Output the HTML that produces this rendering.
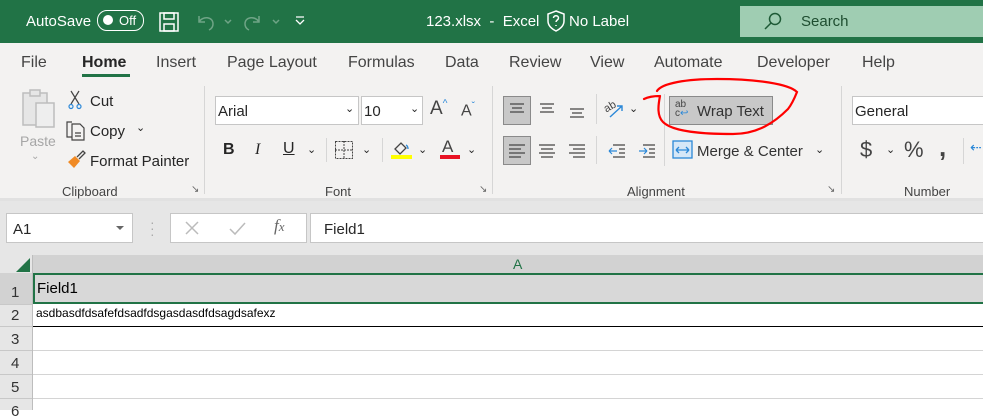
<!DOCTYPE html>
<html><head><meta charset="utf-8"><style>
*{box-sizing:border-box;margin:0;padding:0}
body{width:983px;height:410px;overflow:hidden;background:#fff;font-family:"Segoe UI","Liberation Sans",sans-serif;position:relative;color:#262626}
.a{position:absolute;white-space:nowrap}
.t{font-size:16px;color:#444;margin-top:2px}
.s{font-size:15px;color:#262626;margin-top:2px}
.g{font-size:13px;color:#444;margin-top:2px}
.w{color:#fff;font-size:15px;margin-top:3px}
.box{position:absolute;background:#fff;border:1px solid #c6c6c6}
.sel{position:absolute;background:#c8c8c8;border:1px solid #8a8a8a}
</style></head><body>
<!-- title bar -->
<div class="a" style="left:0;top:0;width:983px;height:43px;background:#217346"></div>
<div class="a w" style="left:26px;top:10px">AutoSave</div>
<div class="a" style="left:97px;top:10px;width:47px;height:21px;border:1.5px solid #fff;border-radius:10px"></div>
<div class="a" style="left:103px;top:15px;width:10px;height:10px;border-radius:5px;background:#fff"></div>
<div class="a" style="left:119px;top:13px;color:#fff;font-size:13px">Off</div>
<svg class="a" style="left:158px;top:11px" width="22" height="22" viewBox="0 0 22 22" fill="none" stroke="#fff" stroke-width="1.5"><rect x="2" y="2" width="18" height="18"/><rect x="6" y="2" width="10" height="6"/><rect x="6" y="13" width="10" height="7"/></svg>
<svg class="a" style="left:195px;top:12px" width="90" height="20" viewBox="0 0 90 20" fill="none" stroke="#6fa486" stroke-width="1.5"><path d="M4 4v6h6M4 10c3-6 14-6 14 2 0 3-2 5-4 6"/><path d="M30 8l3 3 3-3"/><path d="M64 4v6h-6M64 10c-3-6-14-6-14 2 0 3 2 5 4 6"/><path d="M78 8l3 3 3-3"/></svg>
<svg class="a" style="left:294px;top:14px" width="12" height="12" fill="none" stroke="#fff" stroke-width="1.3"><path d="M2 3h8M2 6l4 4 4-4"/></svg>
<div class="a w" style="left:426px;top:10px">123.xlsx &nbsp;-&nbsp; Excel</div>
<svg class="a" style="left:545px;top:9px" width="22" height="24" viewBox="0 0 22 24" fill="none" stroke="#fff" stroke-width="1.5"><path d="M11 2l8 3v7c0 5-4 8-8 10-4-2-8-5-8-10V5z"/><path d="M8.5 9c0-3 5-3 5 0 0 2-2.5 2-2.5 4M11 16v1"/></svg>
<div class="a w" style="left:569px;top:10px">No Label</div>
<div class="a" style="left:740px;top:6px;width:243px;height:31px;background:#9fcdb2"></div>
<svg class="a" style="left:763px;top:11px" width="20" height="20" fill="none" stroke="#1e5a36" stroke-width="1.5"><circle cx="12" cy="8" r="5.5"/><path d="M8 12l-6 6"/></svg>
<div class="a w" style="left:801px;top:10px;color:#1e4d30">Search</div>
<!-- ribbon -->
<div class="a" style="left:0;top:43px;width:983px;height:157px;background:#f3f2f1"></div>
<div class="a" style="left:0;top:198px;width:983px;height:3px;background:#e1e1e1"></div>
<div class="a t" style="left:21px;top:52px">File</div>
<div class="a t" style="left:82px;top:52px;color:#262626;font-weight:bold">Home</div>
<div class="a" style="left:82px;top:74px;width:48px;height:3px;background:#217346"></div>
<div class="a t" style="left:156px;top:52px">Insert</div>
<div class="a t" style="left:227px;top:52px">Page Layout</div>
<div class="a t" style="left:348px;top:52px">Formulas</div>
<div class="a t" style="left:445px;top:52px">Data</div>
<div class="a t" style="left:509px;top:52px">Review</div>
<div class="a t" style="left:590px;top:52px">View</div>
<div class="a t" style="left:654px;top:52px">Automate</div>
<div class="a t" style="left:757px;top:52px">Developer</div>
<div class="a t" style="left:862px;top:52px">Help</div>
<!-- clipboard -->
<svg class="a" style="left:20px;top:88px" width="38" height="42" fill="#e6e6e6" stroke="#bdbdbd" stroke-width="1.5"><rect x="3" y="5" width="24" height="32"/><rect x="10" y="2" width="10" height="6"/><rect x="16" y="15" width="18" height="24" fill="#eee"/></svg>
<div class="a" style="left:20px;top:133px;color:#a6a6a6;font-size:14px">Paste</div>
<div class="a" style="left:31px;top:151px;color:#a6a6a6;font-size:10px">⌄</div>
<svg class="a" style="left:68px;top:90px" width="14" height="20" fill="none" stroke="#444" stroke-width="1.2"><path d="M3 1l8 13M11 1L3 14"/><circle cx="3" cy="16.5" r="2" stroke="#2b88d8"/><circle cx="11" cy="16.5" r="2" stroke="#2b88d8"/></svg>
<div class="a s" style="left:90px;top:91px">Cut</div>
<svg class="a" style="left:65px;top:119px" width="22" height="22" fill="none" stroke="#444" stroke-width="1.2"><path d="M7 3H2v15h5"/><path d="M7 5h8l4 4v12H7z"/><path d="M10 14h6M10 17h6"/></svg>
<div class="a s" style="left:90px;top:121px">Copy</div>
<div class="a" style="left:136px;top:121px;font-size:11px">⌄</div>
<svg class="a" style="left:65px;top:148px" width="22" height="22"><path d="M3 14l7-6 5 5-6 7z" fill="#f08a24"/><path d="M12 9l6-6 2 2-6 6" fill="none" stroke="#444" stroke-width="1.3"/></svg>
<div class="a s" style="left:90px;top:151px">Format Painter</div>
<div class="a g" style="left:62px;top:182px">Clipboard</div>
<div class="a" style="left:191px;top:184px;font-size:10px;color:#666">↘</div>
<div class="a" style="left:204px;top:86px;width:1px;height:108px;background:#d6d6d6"></div>
<!-- font -->
<div class="box" style="left:215px;top:96px;width:144px;height:29px"></div>
<div class="a s" style="left:218px;top:101px">Arial</div>
<div class="a" style="left:345px;top:102px;font-size:11px">⌄</div>
<div class="box" style="left:361px;top:96px;width:62px;height:29px"></div>
<div class="a s" style="left:364px;top:101px">10</div>
<div class="a" style="left:410px;top:102px;font-size:11px">⌄</div>
<div class="a" style="left:430px;top:98px;font-size:19px;color:#444">A<sup style="font-size:10px;color:#2b88d8">^</sup></div>
<div class="a" style="left:461px;top:101px;font-size:16px;color:#444">A<sup style="font-size:10px;color:#2b88d8">ˇ</sup></div>
<div class="a" style="left:223px;top:141px;font-size:16px;font-weight:bold">B</div>
<div class="a" style="left:255px;top:141px;font-size:16px;font-style:italic;font-family:'Liberation Serif',serif">I</div>
<div class="a" style="left:283px;top:140px;font-size:16px;text-decoration:underline">U</div>
<div class="a" style="left:307px;top:143px;font-size:11px">⌄</div>
<div class="a" style="left:326px;top:138px;width:1px;height:24px;background:#d6d6d6"></div>
<svg class="a" style="left:334px;top:140px" width="20" height="20" fill="none" stroke="#444" stroke-dasharray="2 1"><rect x="1.5" y="1.5" width="17" height="17"/><path d="M10 1v18M1 10h18"/></svg>
<div class="a" style="left:362px;top:143px;font-size:11px">⌄</div>
<div class="a" style="left:382px;top:138px;width:1px;height:24px;background:#d6d6d6"></div>
<svg class="a" style="left:391px;top:140px" width="22" height="20" fill="none" stroke="#444" stroke-width="1.3"><path d="M4 9l6-6 5 5-6 6z"/><path d="M15 5c2 1 2 3 2 4" stroke="#2b88d8"/></svg>
<div class="a" style="left:391px;top:155px;width:21px;height:4px;background:#ffff00"></div>
<div class="a" style="left:418px;top:143px;font-size:11px">⌄</div>
<div class="a" style="left:442px;top:137px;font-size:17px;color:#444">A</div>
<div class="a" style="left:440px;top:155px;width:20px;height:4px;background:#e81123"></div>
<div class="a" style="left:467px;top:143px;font-size:11px">⌄</div>
<div class="a g" style="left:325px;top:182px">Font</div>
<div class="a" style="left:479px;top:184px;font-size:10px;color:#666">↘</div>
<div class="a" style="left:492px;top:86px;width:1px;height:108px;background:#d6d6d6"></div>
<!-- alignment -->
<div class="sel" style="left:503px;top:96px;width:28px;height:29px"></div>
<svg class="a" style="left:503px;top:96px" width="90" height="29" stroke="#444" stroke-width="1.2"><path d="M7 8h14M9 12h10M7 16h14"/><path d="M37 8h14M39 12h10M37 16h14"/><path d="M67 13h14M69 17h10M67 21h14"/></svg>
<div class="a" style="left:596px;top:94px;width:1px;height:30px;background:#d6d6d6"></div>
<svg class="a" style="left:602px;top:97px" width="26" height="24" fill="none" stroke-width="1.4"><text x="2" y="13" font-size="11" fill="#444" stroke="none" transform="rotate(-30 8 10)" font-family="Liberation Sans">ab</text><path d="M8 20l12-11M15 9h5v5" stroke="#2b88d8"/></svg>
<div class="a" style="left:629px;top:102px;font-size:11px">⌄</div>
<div class="a" style="left:664px;top:94px;width:1px;height:72px;background:#d6d6d6"></div>
<div class="sel" style="left:669px;top:96px;width:104px;height:29px"></div>
<div class="a" style="left:675px;top:100px;font-size:10px;line-height:9px;color:#444">ab<br>c<span style="color:#2b88d8">↩</span></div>
<div class="a s" style="left:697px;top:101px;color:#333">Wrap Text</div>
<div class="sel" style="left:503px;top:136px;width:28px;height:29px"></div>
<svg class="a" style="left:503px;top:136px" width="160" height="29" stroke="#444" stroke-width="1.2" fill="none"><path d="M6 9h16M6 13h12M6 17h16M6 21h12"/><path d="M36 9h16M38 13h12M36 17h16M38 21h12"/><path d="M66 9h16M70 13h12M66 17h16M70 21h12"/><path d="M110 9h12M110 21h12M116 13h6M116 17h6"/><path d="M114 15h-8M106 15l3-3M106 15l3 3" stroke="#2b88d8"/><path d="M140 9h12M140 21h12M146 13h6M146 17h6"/><path d="M136 15h8M144 15l-3-3M144 15l-3 3" stroke="#2b88d8"/></svg>
<div class="a" style="left:596px;top:136px;width:1px;height:28px;background:#d6d6d6"></div>
<svg class="a" style="left:672px;top:140px" width="22" height="20" fill="none" stroke-width="1.3"><rect x="1" y="1" width="19" height="17" stroke="#2b88d8" fill="#d5e7f7"/><path d="M4 10h13M4 10l3-3M4 10l3 3M17 10l-3-3M17 10l-3 3" stroke="#2b88d8"/></svg>
<div class="a s" style="left:697px;top:141px;color:#333">Merge &amp; Center</div>
<div class="a" style="left:815px;top:143px;font-size:11px">⌄</div>
<div class="a g" style="left:627px;top:182px">Alignment</div>
<div class="a" style="left:827px;top:184px;font-size:10px;color:#666">↘</div>
<div class="a" style="left:841px;top:86px;width:1px;height:108px;background:#d6d6d6"></div>
<!-- number -->
<div class="box" style="left:852px;top:96px;width:140px;height:29px"></div>
<div class="a s" style="left:855px;top:101px">General</div>
<div class="a" style="left:860px;top:137px;font-size:22px;color:#444">$</div>
<div class="a" style="left:886px;top:143px;font-size:11px">⌄</div>
<div class="a" style="left:904px;top:137px;font-size:22px;color:#444">%</div>
<div class="a" style="left:939px;top:132px;font-size:26px;font-weight:bold;color:#444">,</div>
<div class="a" style="left:963px;top:138px;width:1px;height:26px;background:#d6d6d6"></div>
<div class="a" style="left:970px;top:139px;color:#2b88d8;font-size:14px">⇠</div>
<div class="a g" style="left:904px;top:182px">Number</div>
<!-- red loop -->
<svg class="a" style="left:0;top:0" width="983" height="410" fill="none"><path d="M644 99c4-2 10-3 16-3 M660 96c-2 10-3 20 3 26 10 10 40 12 70 12 25 0 42-12 55-25 4-5 7-12 9-17-8-8-40-13-80-13-30 0-55 4-60 12" stroke="#ff0000" stroke-width="2.2" stroke-linecap="round"/></svg>
<!-- formula bar -->
<div class="a" style="left:0;top:201px;width:983px;height:54px;background:#e6e6e6"></div>
<div class="box" style="left:6px;top:213px;width:127px;height:30px"></div>
<div class="a s" style="left:13px;top:219px">A1</div>
<svg class="a" style="left:116px;top:226px" width="8" height="5"><path d="M0 0h8L4 4z" fill="#666"/></svg>
<div class="a" style="left:150px;top:219px;color:#aaa;font-size:14px;line-height:6px">·<br>·<br>·</div>
<div class="box" style="left:170px;top:213px;width:137px;height:30px"></div>
<svg class="a" style="left:182px;top:219px" width="70" height="18" fill="none" stroke="#bbb" stroke-width="1.5"><path d="M4 3l12 12M16 3L4 15"/><path d="M48 10l5 5 10-11"/></svg>
<div class="a" style="left:274px;top:216px;font-family:'Liberation Serif',serif;font-style:italic;font-size:17px;color:#666">f<span style="font-size:13px">x</span></div>
<div class="box" style="left:310px;top:213px;width:680px;height:30px"></div>
<div class="a s" style="left:324px;top:219px">Field1</div>
<!-- grid -->
<div class="a" style="left:0;top:255px;width:983px;height:155px;background:#e6e6e6"></div>
<div class="a" style="left:33px;top:255px;width:950px;height:18px;background:#d2d2d2"></div>
<div class="a" style="left:513px;top:256px;font-size:14px;color:#217346">A</div>
<svg class="a" style="left:16px;top:258px" width="14" height="14"><path d="M14 0v14H0z" fill="#217346"/></svg>
<div class="a" style="left:33px;top:273px;width:950px;height:137px;background:#fff"></div>
<div class="a" style="left:33px;top:273px;width:950px;height:31px;background:#d8d8d8;border:2px solid #217346;border-right:none"></div>
<div class="a" style="left:37px;top:280px;font-family:'Liberation Sans',sans-serif;font-size:15px;color:#000">Field1</div>
<div class="a" style="left:36px;top:306px;font-family:'Liberation Sans',sans-serif;font-size:12px;color:#000">asdbasdfdsafefdsadfdsgasdasdfdsagdsafexz</div>
<div class="a" style="left:33px;top:326px;width:950px;height:1px;background:#000"></div>
<div class="a" style="left:33px;top:350px;width:950px;height:1px;background:#d4d4d4"></div>
<div class="a" style="left:33px;top:374px;width:950px;height:1px;background:#d4d4d4"></div>
<div class="a" style="left:33px;top:398px;width:950px;height:1px;background:#d4d4d4"></div>
<div class="a" style="left:0;top:304px;width:33px;height:1px;background:#c8c8c8"></div>
<div class="a" style="left:0;top:326px;width:33px;height:1px;background:#c8c8c8"></div>
<div class="a" style="left:0;top:350px;width:33px;height:1px;background:#c8c8c8"></div>
<div class="a" style="left:0;top:374px;width:33px;height:1px;background:#c8c8c8"></div>
<div class="a" style="left:0;top:398px;width:33px;height:1px;background:#c8c8c8"></div>
<div class="a" style="left:0;top:273px;width:33px;height:31px;background:#d2d2d2"></div>
<div class="a" style="left:32px;top:255px;width:1px;height:155px;background:#bdbdbd"></div>
<div class="a" style="left:11px;top:284px;font-size:15px;color:#333">1</div>
<div class="a" style="left:11px;top:307px;font-size:15px;color:#333">2</div>
<div class="a" style="left:11px;top:331px;font-size:15px;color:#333">3</div>
<div class="a" style="left:11px;top:355px;font-size:15px;color:#333">4</div>
<div class="a" style="left:11px;top:379px;font-size:15px;color:#333">5</div>
<div class="a" style="left:11px;top:403px;font-size:15px;color:#333">6</div>
</body></html>
